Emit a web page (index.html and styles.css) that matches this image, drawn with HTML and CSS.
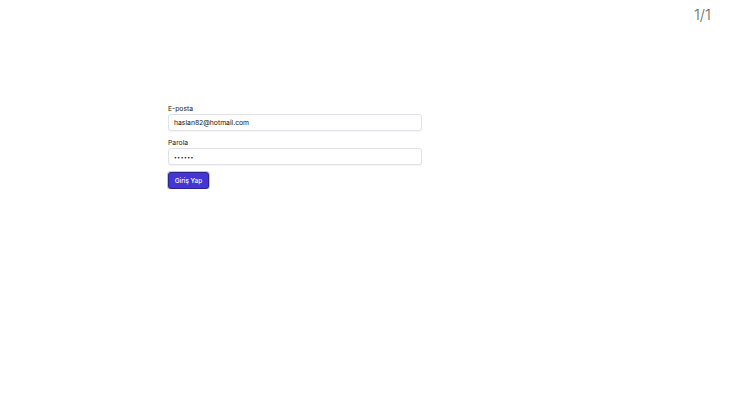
FILE: index.html
```html
<!DOCTYPE html>
<html lang="tr">
<head>
    <meta charset="UTF-8">
    <title>Giriş</title>
    <link rel="stylesheet" href="styles.css">
</head>
<body>

<div class="sayfa">1/1</div>

<div class="container">
    <form class="giris">
        <label for="eposta">E-posta</label>
        <input type="text" id="eposta" value="haslan82@hotmail.com">
        <label for="parola">Parola</label>
        <input type="password" id="parola" value="123456">
        <button type="button">Giriş Yap</button>
    </form>
</div>

</body>
</html>
```

FILE: styles.css
```css
body {
    font-family: 'Inter', 'Liberation Sans', sans-serif;
    margin: 0;
    background-color: #fff;
    color: #111;
}
.sayfa {
    position: absolute;
    top: 5px;
    right: 43px;
    font-size: 15px;
    font-weight: 300;
    color: #666;
}
.container {
    padding: 104px 0 0 168px;
}
.giris {
    display: flex;
    flex-direction: column;
    width: 254px;
}
label {
    font-size: 6.8px;
    line-height: 9px;
    margin-bottom: 1px;
    color: #222;
}
input {
    height: 17px;
    box-sizing: border-box;
    border: 1px solid #e0e0e6;
    border-radius: 3px;
    padding: 0 5px;
    font-family: inherit;
    font-size: 6.8px;
    color: #111;
    margin-bottom: 7px;
    box-shadow: 0 1px 1px rgba(0, 0, 0, 0.04);
}
input[type=password] {
    font-size: 5px;
    letter-spacing: 0.5px;
}
button {
    align-self: flex-start;
    width: 41px;
    height: 17px;
    background-color: #4435d4;
    color: #fff;
    border: 1px solid #2a2490;
    border-radius: 3px;
    font-family: inherit;
    font-size: 6.5px;
    font-weight: 500;
    padding: 0;
    box-shadow: 0 0 0 1px #c4c0f2;
}
```
